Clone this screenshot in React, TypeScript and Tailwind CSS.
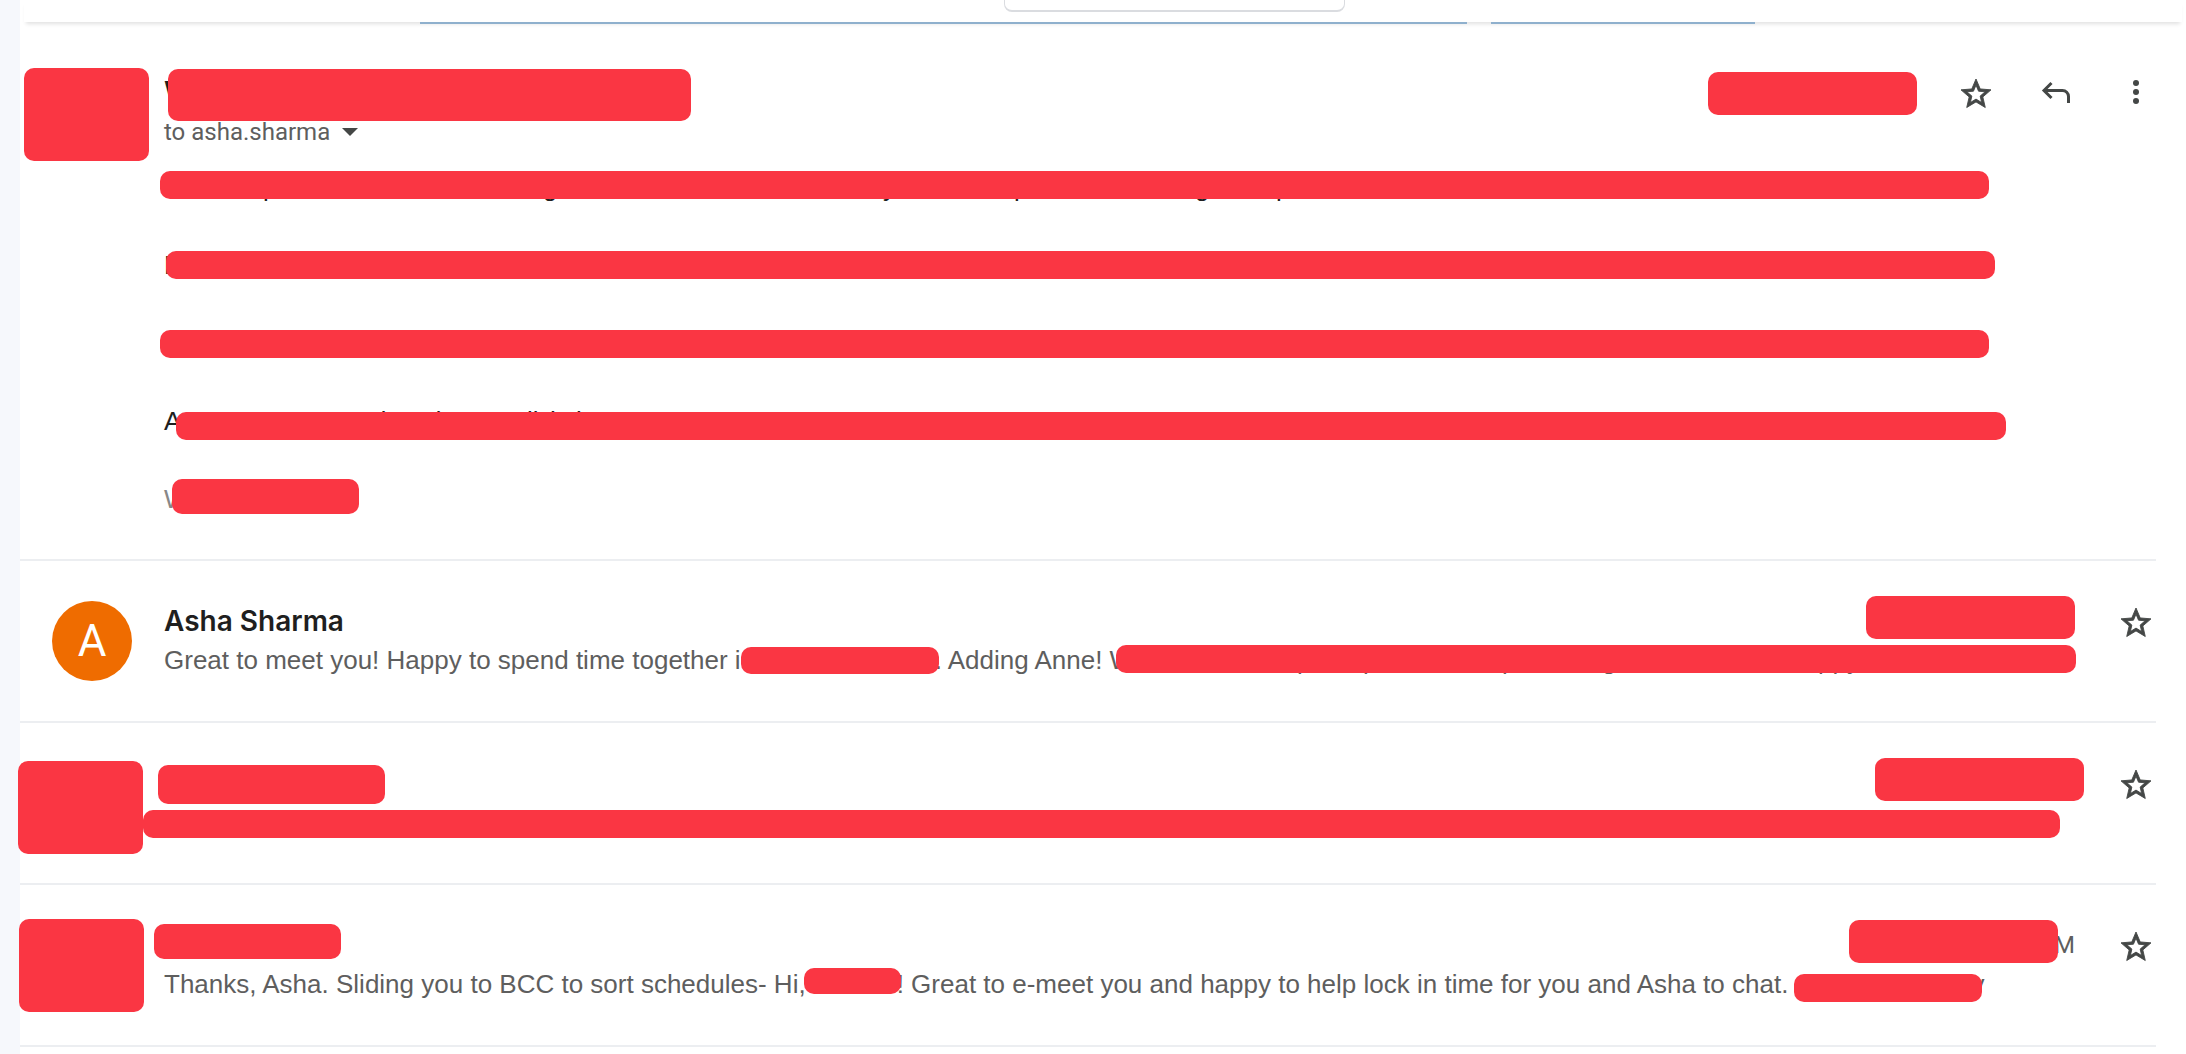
import type { ReactNode } from "react";

// letters that stick out from under the redaction bars
type Mark = { text: string; x: number };

const bodyLines: { marks: Mark[]; bar: string; color: string }[] = [
  {
    marks: [
      { text: "p", x: 99 },
      { text: "g", x: 379 },
      { text: "y", x: 719 },
      { text: "p", x: 850 },
      { text: "g", x: 1031 },
      { text: "p", x: 1112 },
    ],
    bar: "mb-1.5 -ml-1 mr-[167px] h-7 flex-1",
    color: "text-[#1f1f1f]",
  },
  {
    marks: [
      { text: "D", x: 0 },
      { text: "y", x: 20 },
      { text: "p", x: 43 },
      { text: "p", x: 176 },
      { text: "g", x: 518 },
      { text: "p", x: 670 },
      { text: "y", x: 710 },
      { text: "y", x: 1055 },
      { text: "y", x: 1126 },
      { text: "g", x: 1359 },
    ],
    bar: "mb-0.5 ml-0.5 mr-[161px] h-7 flex-1",
    color: "text-[#1f1f1f]",
  },
  {
    marks: [],
    bar: "-ml-1 mr-[167px] h-7 flex-1",
    color: "text-[#1f1f1f]",
  },
  {
    marks: [
      { text: "A", x: 0 },
      { text: "t", x: 163 },
      { text: "d", x: 208 },
      { text: "T", x: 228 },
      { text: "d", x: 263 },
      { text: "t", x: 307 },
      { text: "ll", x: 363 },
      { text: "h", x: 386 },
      { text: "k", x: 412 },
      { text: "?", x: 440 },
    ],
    bar: "mt-2 ml-3 mr-[150px] h-7 flex-1",
    color: "text-[#1f1f1f]",
  },
  {
    marks: [{ text: "W", x: 0 }],
    bar: "mb-1.5 ml-2 h-[35px] w-[187px]",
    color: "text-[#888888]",
  },
];

const snippetTail: Mark[] = [
  { text: "p", x: 1133 },
  { text: "p", x: 1199 },
  { text: "p", x: 1338 },
  { text: "g", x: 1438 },
  { text: "ppy", x: 1654 },
];

function Redaction({ className }: { className: string }) {
  return <span aria-hidden="true" className={`relative z-10 block shrink-0 rounded-[10px] bg-[#fa3643] ${className}`} />;
}

function Marks({ marks }: { marks: Mark[] }) {
  return (
    <>
      {marks.map((m) => (
        <span key={m.x} className="absolute top-0" style={{ left: m.x }}>
          {m.text}
        </span>
      ))}
    </>
  );
}

function StarButton() {
  return (
    <button type="button" aria-label="Star" className="mt-[3px] flex size-10 items-center justify-center text-[#444746]">
      <svg viewBox="0 0 24 24" className="size-9" fill="currentColor" stroke="currentColor" strokeWidth="0.6">
        <path d="M22 9.24l-7.19-.62L12 2 9.19 8.63 2 9.24l5.46 4.73L5.82 21 12 17.27 18.18 21l-1.63-7.03L22 9.24zM12 15.4l-3.76 2.27 1-4.28-3.32-2.88 4.38-.38L12 6.1l1.71 4.04 4.38.38-3.32 2.88 1 4.28L12 15.4z" />
      </svg>
    </button>
  );
}

type RowProps = {
  avatar: ReactNode;
  name: ReactNode;
  time: ReactNode;
  snippet: ReactNode;
};

function MessageRow({ avatar, name, time, snippet }: RowProps) {
  return (
    <li className="flex h-[162px] items-center border-b-2 border-[#eceef1]">
      <div className="w-36 shrink-0">{avatar}</div>
      <div className="min-w-0 flex-1">
        <div className="flex h-10 items-center">
          <h2 className="flex-1 font-[Inter,sans-serif] text-[28px] leading-10 font-semibold text-[#1f1f1f]">{name}</h2>
          <div className="flex items-center text-2xl text-[#5e5e5e]">{time}</div>
          <StarButton />
        </div>
        <p className="relative flex h-10 items-center pb-0.5 font-['Liberation_Sans',Arial,sans-serif] text-[26px] leading-[38px] whitespace-pre text-[#5e5e5e]">
          {snippet}
        </p>
      </div>
    </li>
  );
}

export default function App() {
  return (
    <div className="flex min-h-screen overflow-hidden bg-[#f6f8fc] pl-5 font-[Roboto,sans-serif]">
      <main className="min-w-0 flex-1 bg-white">
        <header className="mx-1 flex h-[22px] bg-white pl-[980px] shadow-[0_4px_4px_-2px_rgba(0,0,0,0.12)]">
          <div className="h-3 w-[341px] rounded-b-lg border border-t-0 border-b-2 border-[#dadce0]" />
        </header>
        <div className="flex gap-6 pl-[400px]">
          <div className="h-0.5 w-[1047px] bg-[#8fb0cd]" />
          <div className="h-0.5 w-[264px] bg-[#8fb0cd]" />
        </div>

        <article className="mr-[30px] flex h-[537px] border-b-2 border-[#eceef1] pt-11">
          <div className="w-36 shrink-0 pl-1">
            <Redaction className="h-[93px] w-[125px]" />
          </div>
          <div className="min-w-0 flex-1 pt-1">
            <div className="flex h-10 items-center">
              <h2 className="flex flex-1 items-center font-[Inter,sans-serif] text-[28px] leading-10 font-semibold text-[#1f1f1f]">
                <span className="w-1">W</span>
                <Redaction className="mt-1.5 h-[52px] w-[523px]" />
              </h2>
              <Redaction className="mt-0.5 mr-[39px] h-[43px] w-[209px]" />
              <div className="flex items-center gap-10">
                <StarButton />
                <button type="button" aria-label="Reply" className="flex size-10 items-center justify-center text-[#444746]">
                  <svg viewBox="0 0 40 40" className="size-10" fill="none" stroke="currentColor" strokeWidth="3">
                    <path d="M15.500 11 8 18.500l7.500 7.500M8 18.500h18.500a6 6 0 0 1 6 6V31" />
                  </svg>
                </button>
                <button type="button" aria-label="More" className="flex size-10 items-center justify-center text-[#444746]">
                  <svg viewBox="0 0 40 40" className="size-10" fill="currentColor">
                    <circle cx="20" cy="11" r="3" />
                    <circle cx="20" cy="20" r="3" />
                    <circle cx="20" cy="29" r="3" />
                  </svg>
                </button>
              </div>
            </div>
            <button type="button" className="flex h-10 items-center gap-3 text-2xl text-[#5e5e5e]">
              to asha.sharma
              <svg viewBox="0 0 16 8" className="h-2 w-4" fill="#444746">
                <path d="M0 0h16L8 8z" />
              </svg>
            </button>

            <div className="flex flex-col gap-[39px] pt-4 font-['Liberation_Sans',Arial,sans-serif] text-[26px] leading-[39px]">
              {bodyLines.map((line, i) => (
                <p key={i} className={`relative flex h-[39px] items-center ${line.color}`}>
                  <Marks marks={line.marks} />
                  <Redaction className={line.bar} />
                </p>
              ))}
            </div>
          </div>
        </article>

        <ul className="mr-[30px]">
          <MessageRow
            avatar={
              <div className="ml-8 flex size-20 items-center justify-center rounded-full bg-[#ef6c00] text-[44px] text-white">
                A
              </div>
            }
            name="Asha Sharma"
            time={<Redaction className="mr-[41px] mb-2 h-[43px] w-[209px]" />}
            snippet={
              <>
                <span>Great to meet you! Happy to spend time together i</span>
                <Redaction className="h-[27px] w-[198px]" />
                <span className="-ml-1">. Adding Anne! </span>
                <span className="w-1.5">W</span>
                <Redaction className="mr-20 mb-0.5 h-7 flex-1" />
                <Marks marks={snippetTail} />
              </>
            }
          />
          <MessageRow
            avatar={<Redaction className="mt-2 -ml-0.5 h-[93px] w-[125px]" />}
            name={<Redaction className="mt-0.5 -ml-1.5 h-[39px] w-[227px]" />}
            time={<Redaction className="mr-8 mb-2 h-[43px] w-[209px]" />}
            snippet={<Redaction className="mt-1 mr-24 -ml-[21px] h-7 flex-1" />}
          />
          <MessageRow
            avatar={<Redaction className="-ml-px h-[93px] w-[125px]" />}
            name={<Redaction className="mb-2 -ml-2.5 h-[35px] w-[187px]" />}
            time={
              <>
                <Redaction className="-mr-1 mb-2 h-[43px] w-[209px]" />
                <span className="pr-[41px]">M</span>
              </>
            }
            snippet={
              <>
                <span>Thanks, Asha. Sliding you to BCC to sort schedules- Hi,</span>
                <Redaction className="mb-1.5 -ml-0.5 h-[26px] w-[97px]" />
                <span className="-ml-1">! Great to e-meet you and happy to help lock in time for you and Asha to chat. </span>
                <Redaction className="mt-2 -ml-0.5 h-7 w-[188px]" />
                <span className="-ml-2.5">y</span>
              </>
            }
          />
        </ul>
      </main>
    </div>
  );
}
